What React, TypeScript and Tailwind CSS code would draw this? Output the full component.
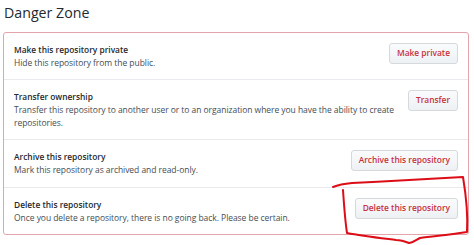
import React from "react";

type Row = {
  title: string;
  desc: string;
  action: string;
};

const rows: Row[] = [
  {
    title: "Make this repository private",
    desc: "Hide this repository from the public.",
    action: "Make private",
  },
  {
    title: "Transfer ownership",
    desc: "Transfer this repository to another user or to an organization where you have the ability to create repositories.",
    action: "Transfer",
  },
  {
    title: "Archive this repository",
    desc: "Mark this repository as archived and read-only.",
    action: "Archive this repository",
  },
  {
    title: "Delete this repository",
    desc: "Once you delete a repository, there is no going back. Please be certain.",
    action: "Delete this repository",
  },
];

function DangerButton({ label }: { label: string }) {
  return (
    <button className="shrink-0 h-[21px] px-[7px] rounded-[3px] border border-[#d6d9dc] bg-gradient-to-b from-[#fafbfc] to-[#eef1f4] text-[#c8313c] text-[8.4px] font-semibold leading-none whitespace-nowrap">
      {label}
    </button>
  );
}

export default function App() {
  return (
    <div
      className="relative w-[474px] h-[245px] overflow-hidden bg-white text-[#24292e]"
      style={{ fontFamily: '"Open Sans", "Noto Sans", sans-serif' }}
    >
      <h2 className="pl-[4px] pt-[3px] text-[14.2px] leading-[20px] font-normal text-[#24292e]">
        Danger Zone
      </h2>

      <div className="ml-[3px] mt-[9px] w-[466px] rounded-[3px] border border-[#e4a4ac]">
        {rows.map((row, i) => (
          <div
            key={row.title}
            className={
              "flex items-start justify-between gap-[8px] px-[10px] py-[10px] " +
              (i === 2 ? "pb-[11px] " : "") +
              (i < rows.length - 1 ? "border-b border-[#e8eaed]" : "")
            }
          >
            <div className="w-[392px]">
              <div className="text-[8.4px] leading-[13px] font-semibold text-[#24292e]">
                {row.title}
              </div>
              <div className="text-[8.5px] leading-[13px] tracking-[-0.05px] text-[#444d56]">
                {row.desc}
              </div>
            </div>
            <DangerButton label={row.action} />
          </div>
        ))}
      </div>

      {/* hand-drawn red marker around the delete button */}
      <svg
        className="absolute left-0 top-0 pointer-events-none"
        width="474"
        height="245"
        viewBox="0 0 474 245"
      >
        <path
          d="M333 187 C338 185 342 184 352 183 C390 181 430 179 463 177 C466 195 468 215 467 232 C450 235 432 236 420 238 C416 240 412 243 409 243 C404 241 401 240 396 240 C380 238 362 236 347 233 C345 220 344 205 343 190"
          fill="none"
          stroke="#dc0d16"
          strokeWidth="2"
          strokeLinecap="round"
          strokeLinejoin="round"
        />
      </svg>
    </div>
  );
}
